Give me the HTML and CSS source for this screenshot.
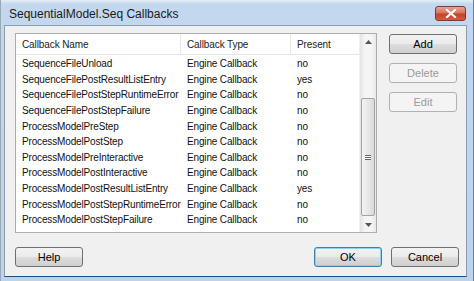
FILE: index.html
```html
<!DOCTYPE html>
<html lang="en">
<head>
  <meta charset="UTF-8">
  <title>SequentialModel.Seq Callbacks</title>
  <link rel="stylesheet" href="styles.css">
</head>
<body>
  <div class="window">
    <div class="titlebar">
      <span class="title">SequentialModel.Seq Callbacks</span>
      <div class="close-btn">
        <svg width="12" height="9" viewBox="0 0 12 9">
          <path d="M2 1 L10 8 M10 1 L2 8" stroke="#fff" stroke-width="2.2" stroke-linecap="square"/>
        </svg>
      </div>
    </div>

    <div class="client">
      <div class="top">
        <div class="listbox">
          <div class="list-main">
            <div class="list-header">
              <div class="col name">Callback Name</div>
              <div class="col type">Callback Type</div>
              <div class="col present">Present</div>
            </div>
            <div class="rows">
              <div class="row"><span class="col name">SequenceFileUnload</span><span class="col type">Engine Callback</span><span class="col present">no</span></div>
              <div class="row"><span class="col name">SequenceFilePostResultListEntry</span><span class="col type">Engine Callback</span><span class="col present">yes</span></div>
              <div class="row"><span class="col name">SequenceFilePostStepRuntimeError</span><span class="col type">Engine Callback</span><span class="col present">no</span></div>
              <div class="row"><span class="col name">SequenceFilePostStepFailure</span><span class="col type">Engine Callback</span><span class="col present">no</span></div>
              <div class="row"><span class="col name">ProcessModelPreStep</span><span class="col type">Engine Callback</span><span class="col present">no</span></div>
              <div class="row"><span class="col name">ProcessModelPostStep</span><span class="col type">Engine Callback</span><span class="col present">no</span></div>
              <div class="row"><span class="col name">ProcessModelPreInteractive</span><span class="col type">Engine Callback</span><span class="col present">no</span></div>
              <div class="row"><span class="col name">ProcessModelPostInteractive</span><span class="col type">Engine Callback</span><span class="col present">no</span></div>
              <div class="row"><span class="col name">ProcessModelPostResultListEntry</span><span class="col type">Engine Callback</span><span class="col present">yes</span></div>
              <div class="row"><span class="col name">ProcessModelPostStepRuntimeError</span><span class="col type">Engine Callback</span><span class="col present">no</span></div>
              <div class="row"><span class="col name">ProcessModelPostStepFailure</span><span class="col type">Engine Callback</span><span class="col present">no</span></div>
            </div>
          </div>
          <div class="scrollbar">
            <div class="arrow">
              <svg width="7" height="4" viewBox="0 0 7 4"><path d="M0 4 L3.5 0 L7 4 Z" fill="#555"/></svg>
            </div>
            <div class="track">
              <div class="thumb">
                <div class="grip"></div>
              </div>
            </div>
            <div class="arrow">
              <svg width="7" height="4" viewBox="0 0 7 4"><path d="M0 0 L3.5 4 L7 0 Z" fill="#555"/></svg>
            </div>
          </div>
        </div>

        <div class="side-buttons">
          <button class="btn">Add</button>
          <button class="btn" disabled>Delete</button>
          <button class="btn" disabled>Edit</button>
        </div>
      </div>

      <div class="bottom">
        <button class="btn">Help</button>
        <div class="bottom-right">
          <button class="btn default">OK</button>
          <button class="btn">Cancel</button>
        </div>
      </div>
    </div>
  </div>
</body>
</html>
```

FILE: styles.css
```css
body {
  margin: 0;
  background-color: #fff;
  font-family: "Liberation Sans", Arial, sans-serif;
}

.window {
  width: 474px;
  height: 281px;
  display: flex;
  flex-direction: column;
  background: linear-gradient(#e6eef7 0px, #c3d8ee 4px, #bcd3ec 100%);
  box-sizing: border-box;
  border-left: 1px solid #9aa7b5;
  border-right: 1px solid #6b7f95;
}

.titlebar {
  height: 25px;
  display: flex;
  align-items: center;
  justify-content: space-between;
  padding: 0 7px 0 8px;
  flex-shrink: 0;
}

.title {
  font-size: 12px;
  color: #1a1a1a;
  margin-top: 2px;
}

.close-btn {
  width: 29px;
  height: 13px;
  margin-top: 2px;
  border: 1px solid #7a3a32;
  border-radius: 3px;
  background: linear-gradient(#e8a493 0%, #d8735f 45%, #c2422c 55%, #d55b3d 100%);
  display: flex;
  align-items: center;
  justify-content: center;
}

/* Zone cliente grise */
.client {
  flex: 1;
  margin: 0 6px 4px 3px;
  background-color: #f0f0f0;
  border: 1px solid #8a9cb0;
  border-bottom-color: #1f4d7a;
  padding: 7px 7px 9px 10px;
  display: flex;
  flex-direction: column;
}

.top {
  display: flex;
  gap: 12px;
}

.listbox {
  width: 362px;
  height: 200px;
  box-sizing: border-box;
  border: 1px solid #abadb3;
  background: #fff;
  display: flex;
}

.list-main {
  flex: 1;
  overflow: hidden;
}

.list-header {
  display: flex;
  height: 20px;
  align-items: center;
  border-bottom: 1px solid #e5e5e5;
  font-size: 10px;
  letter-spacing: -0.1px;
  color: #222;
}

.list-header .col {
  height: 100%;
  display: flex;
  align-items: center;
  box-sizing: border-box;
  border-right: 1px solid #e8e8e8;
}

.list-header .col.present {
  border-right: none;
}

.col.name {
  width: 165px;
  padding-left: 6px;
  box-sizing: border-box;
  flex-shrink: 0;
}

.col.type {
  width: 110px;
  padding-left: 6px;
  box-sizing: border-box;
  flex-shrink: 0;
}

.col.present {
  flex: 1;
  padding-left: 6px;
  box-sizing: border-box;
}

.rows {
  padding-top: 1px;
}

.row {
  display: flex;
  height: 15.6px;
  align-items: center;
  font-size: 10px;
  letter-spacing: -0.15px;
  color: #111;
  white-space: nowrap;
}

.scrollbar {
  width: 16px;
  display: flex;
  flex-direction: column;
  background: linear-gradient(90deg, #e3e3e3, #f5f5f5 30%, #f5f5f5 70%, #e8e8e8);
  border-left: 1px solid #f0f0f0;
}

.arrow {
  height: 15px;
  display: flex;
  align-items: center;
  justify-content: center;
  flex-shrink: 0;
}

.track {
  flex: 1;
  display: flex;
  flex-direction: column;
  justify-content: flex-end;
  padding-bottom: 1px;
}

.thumb {
  height: 116px;
  margin: 0 1px;
  border: 1px solid #9da3aa;
  border-radius: 2px;
  background: linear-gradient(90deg, #f3f3f3, #e8e8e8 50%, #d9d9d9);
  display: flex;
  align-items: center;
  justify-content: center;
}

.grip {
  width: 6px;
  height: 5px;
  border-top: 1px solid #666;
  border-bottom: 1px solid #666;
  background: linear-gradient(#fff 0, #fff 1px, #666 1px, #666 2px, #fff 2px, #fff 3px, #666 3px, #666 4px, #fff 4px);
  box-sizing: border-box;
}

.side-buttons {
  display: flex;
  flex-direction: column;
  gap: 9px;
  padding-top: 1px;
}

.btn {
  width: 68px;
  height: 20px;
  font-family: "Liberation Sans", Arial, sans-serif;
  font-size: 11px;
  color: #000;
  border: 1px solid #707070;
  border-radius: 3px;
  background: linear-gradient(#f2f2f2 0%, #ebebeb 50%, #dddddd 51%, #cfcfcf 100%);
  padding: 0;
}

.btn:disabled {
  color: #9a9a9a;
  border-color: #adb2b5;
  background: #f4f4f4;
}

.btn.default {
  border-color: #3c7fb1;
  box-shadow: inset 0 0 0 1px #8fd0f0;
}

.bottom {
  margin-top: 14px;
  display: flex;
  justify-content: space-between;
}

.bottom-right {
  display: flex;
  gap: 9px;
}
```
